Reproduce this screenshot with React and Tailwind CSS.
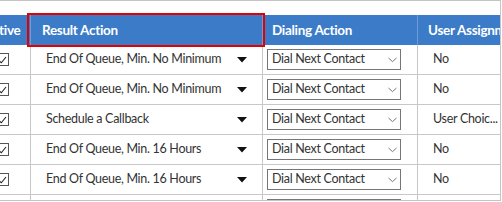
import React from "react";

const rows = [
    {result: "End Of Queue, Min. No Minimum", dialing: "Dial Next Contact", user: "No"},
    {result: "End Of Queue, Min. No Minimum", dialing: "Dial Next Contact", user: "No"},
    {result: "Schedule a Callback", dialing: "Dial Next Contact", user: "User Choic..."},
    {result: "End Of Queue, Min. 16 Hours", dialing: "Dial Next Contact", user: "No"},
    {result: "End Of Queue, Min. 16 Hours", dialing: "Dial Next Contact", user: "No"},
    {result: "End Of Queue, Min. 16 Hours", dialing: "Dial Next Contact", user: "No"},
];

const Check = () => (
    <span className="w-[13px] h-[13px] border border-[#555] bg-white flex items-center justify-center">
        <svg width="9" height="8" viewBox="0 0 9 8">
            <path d="M1 4.5 L3.3 6.8 L8 1" fill="none" stroke="#222" strokeWidth="1.1"/>
        </svg>
    </span>
);

const Caret = () => (
    <svg width="10" height="6" viewBox="0 0 10 6">
        <path d="M0 0 H10 L5 5.5 Z" fill="#111"/>
    </svg>
);

const Chevron = () => (
    <svg width="9" height="6" viewBox="0 0 9 6">
        <path d="M0.5 1 L4.5 4.6 L8.5 1" fill="none" stroke="#777" strokeWidth="1"/>
    </svg>
);

const App = () => {
    return (
        <div className="w-[502px] h-[202px] bg-white overflow-hidden relative" style={{fontFamily: "Lato, 'Noto Sans', sans-serif"}}>
            <div className="w-[501px] h-[201px] border-t border-r border-b border-[#c4c4c4] overflow-hidden pt-[14px]">
                <div className="ml-[-22px] w-max">
                    {/* header */}
                    <div className="flex h-[30px] bg-[#3b7bc8] text-white font-bold text-[13.5px] tracking-[-0.3px] whitespace-nowrap">
                        <div className="w-[53px] border-r border-white/25 flex items-center pl-[6px]">Active</div>
                        <div className="w-[232px] border-r border-white/25 flex items-center pl-[11px]">Result Action</div>
                        <div className="w-[155px] border-r border-white/25 flex items-center pl-[9px]">Dialing Action</div>
                        <div className="w-[120px] flex items-center pl-[10px]">User Assignment</div>
                    </div>
                    {rows.map((r, i) => (
                        <div key={i} className="flex h-[30px] border-b border-[#c8c8c8] text-[12.5px] tracking-[-0.3px] text-[#333] whitespace-nowrap">
                            <div className="w-[53px] border-r border-[#c8c8c8] flex items-center pl-[18px]">
                                <Check/>
                            </div>
                            <div className="w-[232px] border-r border-[#c8c8c8] flex items-center justify-between pl-[15px] pr-[15px]">
                                <span>{r.result}</span>
                                <Caret/>
                            </div>
                            <div className="w-[155px] border-r border-[#c8c8c8] flex items-center pl-[4px]">
                                <div className="w-[134px] h-[21px] border border-[#767676] flex items-center justify-between pl-[4px] pr-[3px]">
                                    <span>{r.dialing}</span>
                                    <Chevron/>
                                </div>
                            </div>
                            <div className="w-[120px] flex items-center pl-[15px]">{r.user}</div>
                        </div>
                    ))}
                </div>
            </div>
            <div className="absolute left-[27px] top-[13px] w-[238px] h-[34px] border-2 border-[#e30000]"/>
        </div>
    );
};

export default App;
